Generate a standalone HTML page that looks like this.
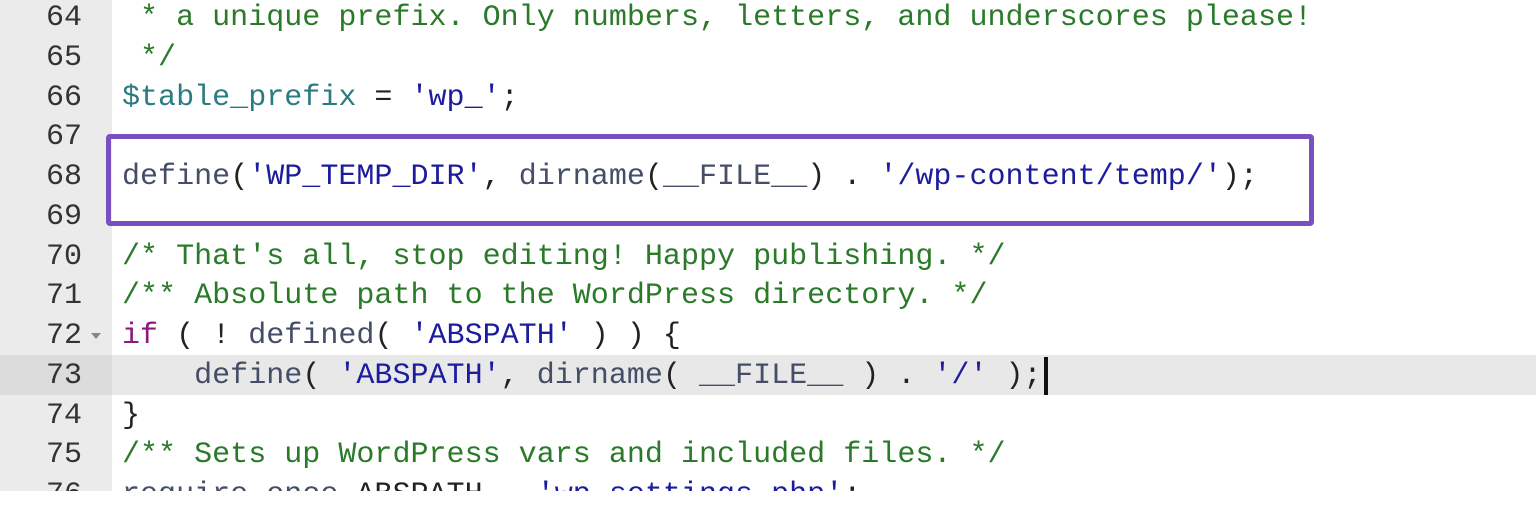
<!DOCTYPE html>
<html><head><meta charset="utf-8"><style>
html,body{margin:0;padding:0;background:#fff;width:1536px;height:506px;overflow:hidden}
.ed{position:absolute;left:0;top:0;width:1536px;height:491px;overflow:hidden;background:#fff}
.gut{position:absolute;left:0;top:0;width:112px;height:491px;background:#ebebeb}
.ln{position:absolute;left:0;width:1536px;height:39.75px;line-height:39.75px;font-family:"Liberation Mono",monospace;font-size:30.05px;white-space:pre;color:#222}
.ln .n{position:absolute;left:0;width:82px;text-align:right;color:#333;top:2px}
.ln .c{position:absolute;left:122px;top:2px}
.hl{background:#e8e8e8}
.cm{color:#2a7a2a}.vr{color:#2b7c82}.st{color:#1c1c9e}.kw{color:#8e1a7e}.fn{color:#444e66}
.box{position:absolute;left:106px;top:134px;width:1198px;height:82px;border:5px solid #7a4fbf;border-radius:4px}
.cur{position:absolute;left:1044px;top:357px;width:4px;height:38px;background:#111}
.fold{position:absolute;left:91px;top:333px;width:0;height:0;border-left:5px solid transparent;border-right:5px solid transparent;border-top:6px solid #888}
</style></head><body>
<div class="ed">
<div class="gut"></div>
<div class="ln" style="top:-3px"><span class="n">64</span><span class="c cm"> * a unique prefix. Only numbers, letters, and underscores please!</span></div>
<div class="ln" style="top:37px"><span class="n">65</span><span class="c cm"> */</span></div>
<div class="ln" style="top:77px"><span class="n">66</span><span class="c"><span class="vr">$table_prefix</span> = <span class="st">'wp_'</span>;</span></div>
<div class="ln" style="top:116px"><span class="n">67</span></div>
<div class="ln" style="top:156px"><span class="n">68</span><span class="c"><span class="fn">define</span>(<span class="st">'WP_TEMP_DIR'</span>, <span class="fn">dirname</span>(<span class="fn">__FILE__</span>) . <span class="st">'/wp-content/temp/'</span>);</span></div>
<div class="ln" style="top:196px"><span class="n">69</span></div>
<div class="ln" style="top:236px"><span class="n">70</span><span class="c cm">/* That's all, stop editing! Happy publishing. */</span></div>
<div class="ln" style="top:275px"><span class="n">71</span><span class="c cm">/** Absolute path to the WordPress directory. */</span></div>
<div class="ln" style="top:315px"><span class="n">72</span><span class="c"><span class="kw">if</span> ( ! <span class="fn">defined</span>( <span class="st">'ABSPATH'</span> ) ) {</span></div>
<div class="ln hl" style="top:355px"><span class="n" style="background:#dcdcdc;width:112px;top:0;height:39.75px"></span><span class="n">73</span><span class="c">    <span class="fn">define</span>( <span class="st">'ABSPATH'</span>, <span class="fn">dirname</span>( <span class="fn">__FILE__</span> ) . <span class="st">'/'</span> );</span></div>
<div class="ln" style="top:395px"><span class="n">74</span><span class="c">}</span></div>
<div class="ln" style="top:434px"><span class="n">75</span><span class="c cm">/** Sets up WordPress vars and included files. */</span></div>
<div class="ln" style="top:474px"><span class="n">76</span><span class="c"><span class="fn">require_once</span> ABSPATH . <span class="st">'wp-settings.php'</span>;</span></div>
<div class="fold"></div>
<div class="cur"></div>
<div class="box"></div>
</div>
</body></html>
